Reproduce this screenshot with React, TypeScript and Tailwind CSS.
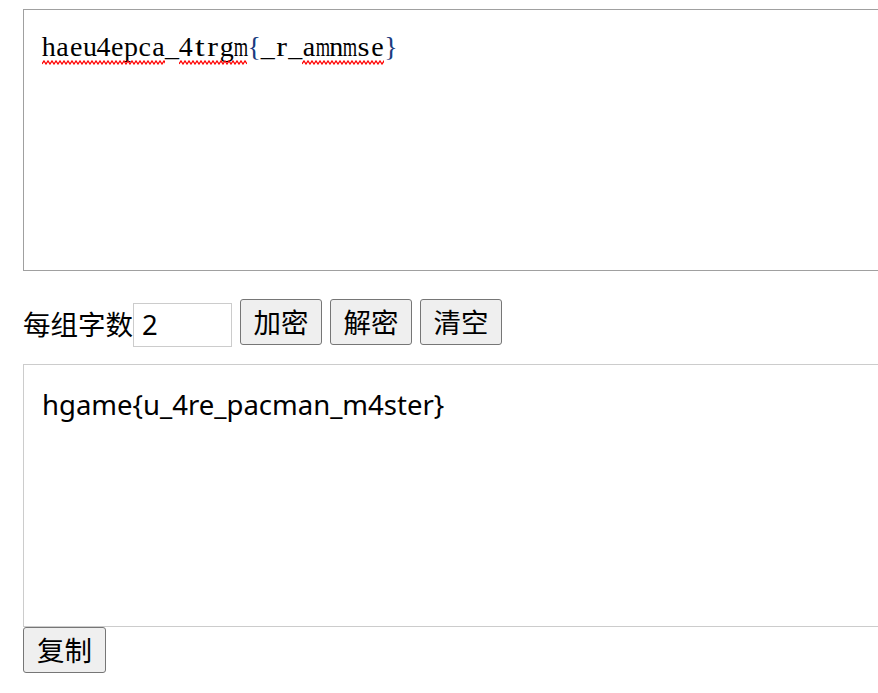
import React from "react";

const CELL = 13.7;

const SCALE: Record<string, string> = {
  m: "scale-x-[0.66]",
  t: "scale-x-[1.25]",
  r: "scale-x-[1.15]",
  s: "scale-x-[1.1]",
};

function Chars({ text, color }: { text: string; color?: string }) {
  return (
    <>
      {text.split("").map((c, i) => (
        <span
          key={i}
          className="inline-flex justify-center overflow-visible"
          style={{ width: CELL, color }}
        >
          <span className={"inline-block shrink-0 " + (SCALE[c] ?? "")}>{c}</span>
        </span>
      ))}
    </>
  );
}

function Wavy({ text }: { text: string }) {
  const w = text.length * CELL;
  let d = "M0 4";
  for (let x = 0; x < w - 1; x += 4) {
    d += ` L${x + 2} 1 L${x + 4} 4`;
  }
  return (
    <span className="relative inline-block">
      <Chars text={text} />
      <svg
        className="absolute left-0 bottom-[-2px]"
        width={w}
        height={5}
        viewBox={`0 0 ${w} 5`}
      >
        <path d={d} fill="none" stroke="#ff0000" strokeWidth={1.3} />
      </svg>
    </span>
  );
}

const cjk = '"Noto Sans CJK SC", sans-serif';

export default function App() {
  const btn =
    "w-[82px] h-[46px] flex items-center justify-center bg-[#efefef] border border-[#767676] rounded-[3px] leading-none";
  return (
    <div className="w-[878px] h-[693px] overflow-hidden bg-white">
      <div className="pl-[23px] pt-[9px]">
        <div className="w-[900px] h-[262px] border border-[#a0a0a0] pl-[18px] pt-[21px]">
          <div
            className="text-[28px] leading-[32px] text-black whitespace-nowrap"
            style={{ fontFamily: '"Liberation Serif", serif' }}
          >
            <Wavy text="haeu4epca" />
            <Chars text="_" />
            <Wavy text="4trgm" />
            <Chars text="{" color="#1b3c80" />
            <Chars text="_r_" />
            <Wavy text="amnmse" />
            <Chars text="}" color="#1b3c80" />
          </div>
        </div>

        <div
          className="mt-[28px] flex items-start h-[49px] text-[27.5px] text-black"
          style={{ fontFamily: cjk }}
        >
          <span className="mt-[7px] leading-[34px]">每组字数</span>
          <div
            className="mt-[4px] w-[99px] h-[44px] border border-[#cccccc] pl-[8px] flex items-center leading-none"
            style={{ fontFamily: '"Noto Sans", sans-serif' }}
          >
            2
          </div>
          <button className={"ml-[8px] " + btn}>加密</button>
          <button className={"ml-[8px] " + btn}>解密</button>
          <button className={"ml-[8px] " + btn}>清空</button>
        </div>

        <div className="mt-[16px] w-[900px] h-[263px] border border-[#cccccc] pl-[18px] pt-[23px]">
          <div
            className="text-[27.5px] leading-[34px] text-black"
            style={{ fontFamily: '"Noto Sans", "Noto Sans CJK SC", sans-serif' }}
          >
            hgame{"{"}u_4re_pacman_m4ster{"}"}
          </div>
        </div>

        <button
          className="w-[83px] h-[46px] flex items-center justify-center bg-[#efefef] border border-[#767676] rounded-[3px] text-[27.5px] leading-none text-black"
          style={{ fontFamily: cjk }}
        >
          复制
        </button>
      </div>
    </div>
  );
}
